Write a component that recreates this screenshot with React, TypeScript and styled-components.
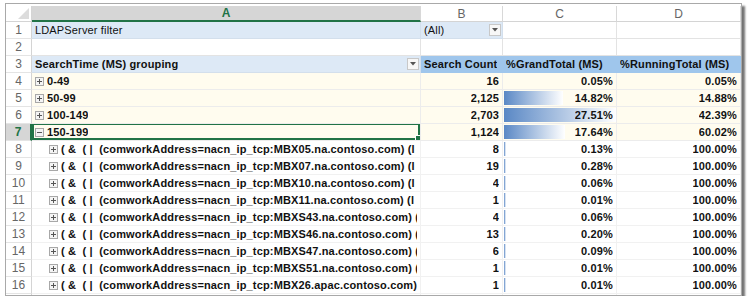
import React from "react";
import styled, { createGlobalStyle, css } from "styled-components";

const COLS = "26px 389px 82px 114px 124px";
const GREEN = "#217346";
const CREAM = "#fffcef";
const LIGHT_BLUE = "#dde9f6";
const HEAD_BLUE = "#9fc6ec";

const GlobalStyle = createGlobalStyle`
  html, body {
    margin: 0;
    padding: 0;
    background: #fff;
  }
  body {
    font-family: "Liberation Sans", Arial, sans-serif;
    font-size: 11px;
    color: #111;
  }
`;

const Frame = styled.div`
  box-sizing: border-box;
  margin: 3px 0 0 5px;
  width: 737px;
  height: 293px;
  padding-top: 2px;
  border: 1px solid #a9a9a9;
  box-shadow: 3px 3px 2px rgba(0, 0, 0, 0.55);
  background: #fff;
  overflow: hidden;
`;

const Row = styled.div<{ $h?: number }>`
  display: grid;
  grid-template-columns: ${COLS};
  height: ${(p) => p.$h ?? 17}px;
`;

const Corner = styled.div`
  position: relative;
  box-sizing: border-box;
  border-right: 1px solid #d4d4d4;
  border-bottom: 1px solid #d4d4d4;
  &::after {
    content: "";
    position: absolute;
    right: 2px;
    bottom: 2px;
    border-style: solid;
    border-width: 0 0 11px 11px;
    border-color: transparent transparent #dcdcdc transparent;
  }
`;

const ColHead = styled.div<{ $active?: boolean }>`
  box-sizing: border-box;
  display: flex;
  align-items: center;
  justify-content: center;
  font-size: 12px;
  color: #666;
  background: #fff;
  border-right: 1px solid #d8d8d8;
  border-bottom: 1px solid #d4d4d4;
  ${(p) =>
    p.$active &&
    css`
      background: #d6d6d6;
      color: ${GREEN};
      font-weight: bold;
      border-bottom: 2px solid ${GREEN};
    `}
`;

const RowHead = styled.div<{ $active?: boolean }>`
  box-sizing: border-box;
  display: flex;
  align-items: center;
  justify-content: center;
  font-size: 12px;
  color: #666;
  background: #fff;
  border-right: 1px solid #d4d4d4;
  border-bottom: 1px solid #e4e4e4;
  ${(p) =>
    p.$active &&
    css`
      background: #d6d6d6;
      color: ${GREEN};
      font-weight: bold;
      border-right: 2px solid ${GREEN};
    `}
`;

const Cell = styled.div<{
  $bg?: string;
  $right?: boolean;
  $bold?: boolean;
  $indent?: number;
  $line?: string;
}>`
  position: relative;
  box-sizing: border-box;
  display: flex;
  align-items: center;
  justify-content: ${(p) => (p.$right ? "flex-end" : "flex-start")};
  gap: 2px;
  min-width: 0;
  padding: 0 3px 0 ${(p) => 3 + (p.$indent ?? 0)}px;
  background: ${(p) => p.$bg ?? "#fff"};
  font-weight: ${(p) => (p.$bold ? "bold" : "normal")};
  white-space: pre;
  overflow: hidden;
  border-right: 1px solid ${(p) => p.$line ?? "#e3e3e3"};
  border-bottom: 1px solid ${(p) => p.$line ?? "#e3e3e3"};
`;

const CellText = styled.span`
  position: relative;
  min-width: 0;
  overflow: hidden;
  letter-spacing: 0.15px;
`;

const Selection = styled.div`
  position: absolute;
  inset: -1px 0 0 0;
  border: 2px solid ${GREEN};
  pointer-events: none;
  &::after {
    content: "";
    position: absolute;
    right: -4px;
    bottom: -4px;
    width: 5px;
    height: 5px;
    background: ${GREEN};
    border: 1px solid #fff;
  }
`;

const Bar = styled.div`
  position: absolute;
  left: 1px;
  top: 1px;
  bottom: 1px;
  background: linear-gradient(to right, #5a88c5, #ffffff);
`;

const DropButton = styled.span`
  position: absolute;
  right: 1px;
  top: 2px;
  width: 12px;
  height: 12px;
  box-sizing: border-box;
  border: 1px solid #c8c8c8;
  background: #f7f7f7;
  display: flex;
  align-items: center;
  justify-content: center;
`;

const Toggle: React.FC<{ open?: boolean }> = ({ open }) => (
  <svg width="9" height="9" viewBox="0 0 9 9" style={{ flex: "none", marginRight: 1 }}>
    <rect x="0.5" y="0.5" width="8" height="8" fill="#f4f4f4" stroke="#a8a8a8" />
    <line x1="2" y1="4.5" x2="7" y2="4.5" stroke="#555" />
    {!open && <line x1="4.5" y1="2" x2="4.5" y2="7" stroke="#555" />}
  </svg>
);

const Arrow: React.FC = () => (
  <svg width="6" height="4" viewBox="0 0 6 4">
    <path d="M0 0h6L3 3.5z" fill="#555" />
  </svg>
);

type PivotRow = {
  n: number;
  label: string;
  count: string;
  grand: string;
  running: string;
  bar: number;
  level: 0 | 1;
  open?: boolean;
};

// the visible part of each LDAP filter, as far as column A shows it
const detail = (
  n: number,
  host: string,
  tail: string,
  count: string,
  grand: string
): PivotRow => ({
  n,
  label: `( &  ( |  (comworkAddress=nacn_ip_tcp:${host}.contoso.com)${tail}`,
  count,
  grand,
  running: "100.00%",
  bar: 2,
  level: 1,
});

const rows: PivotRow[] = [
  { n: 4, label: "0-49", count: "16", grand: "0.05%", running: "0.05%", bar: 0, level: 0 },
  { n: 5, label: "50-99", count: "2,125", grand: "14.82%", running: "14.88%", bar: 59, level: 0 },
  { n: 6, label: "100-149", count: "2,703", grand: "27.51%", running: "42.39%", bar: 112, level: 0 },
  { n: 7, label: "150-199", count: "1,124", grand: "17.64%", running: "60.02%", bar: 61, level: 0, open: true },
  detail(8, "MBX05.na", " (l", "8", "0.13%"),
  detail(9, "MBX07.na", " (l", "19", "0.28%"),
  detail(10, "MBX10.na", " (l", "4", "0.06%"),
  detail(11, "MBX11.na", " (l", "1", "0.01%"),
  detail(12, "MBXS43.na", " (", "4", "0.06%"),
  detail(13, "MBXS46.na", " (", "13", "0.20%"),
  detail(14, "MBXS47.na", " (", "6", "0.09%"),
  detail(15, "MBXS51.na", " (", "1", "0.01%"),
  detail(16, "MBX26.apac", "", "1", "0.01%"),
  detail(17, "MBX30.apac", "", "2", "0.01%"),
];

const App: React.FC = () => {
  return (
    <>
      <GlobalStyle />
      <Frame>
        <Row $h={16}>
          <Corner />
          <ColHead $active>A</ColHead>
          <ColHead>B</ColHead>
          <ColHead>C</ColHead>
          <ColHead>D</ColHead>
        </Row>

        <Row>
          <RowHead>1</RowHead>
          <Cell $bg={LIGHT_BLUE} $line="#d3dfec">
            <CellText>LDAPServer filter</CellText>
          </Cell>
          <Cell $bg={LIGHT_BLUE} $line="#d3dfec">
            <CellText>(All)</CellText>
            <DropButton>
              <Arrow />
            </DropButton>
          </Cell>
          <Cell />
          <Cell />
        </Row>

        <Row>
          <RowHead>2</RowHead>
          <Cell />
          <Cell />
          <Cell />
          <Cell />
        </Row>

        <Row>
          <RowHead>3</RowHead>
          <Cell $bg={LIGHT_BLUE} $bold $line="#d3dfec">
            <CellText>SearchTime (MS) grouping</CellText>
            <DropButton>
              <Arrow />
            </DropButton>
          </Cell>
          <Cell $bg={HEAD_BLUE} $bold $line={HEAD_BLUE}>
            <CellText>Search Count</CellText>
          </Cell>
          <Cell $bg={HEAD_BLUE} $bold $line={HEAD_BLUE}>
            <CellText>%GrandTotal (MS)</CellText>
          </Cell>
          <Cell $bg={HEAD_BLUE} $bold $line={HEAD_BLUE}>
            <CellText>%RunningTotal (MS)</CellText>
          </Cell>
        </Row>

        {rows.map((r) => {
          const bg = r.level === 0 ? CREAM : "#fff";
          const line = r.level === 0 ? "#ececec" : "#f1f1f1";
          return (
            <Row key={r.n}>
              <RowHead $active={r.n === 7}>{r.n}</RowHead>
              <Cell $bg={bg} $bold $indent={r.level * 14} $line={line}>
                <Toggle open={r.open} />
                <CellText>{r.label}</CellText>
                {r.n === 7 && <Selection />}
              </Cell>
              <Cell $bg={bg} $bold $right $line={line}>
                <CellText>{r.count}</CellText>
              </Cell>
              <Cell $bg={bg} $bold $right $line={line}>
                {r.bar > 0 && <Bar style={{ width: r.bar }} />}
                <CellText>{r.grand}</CellText>
              </Cell>
              <Cell $bg={bg} $bold $right $line={line}>
                <CellText>{r.running}</CellText>
              </Cell>
            </Row>
          );
        })}
      </Frame>
    </>
  );
};

export default App;
